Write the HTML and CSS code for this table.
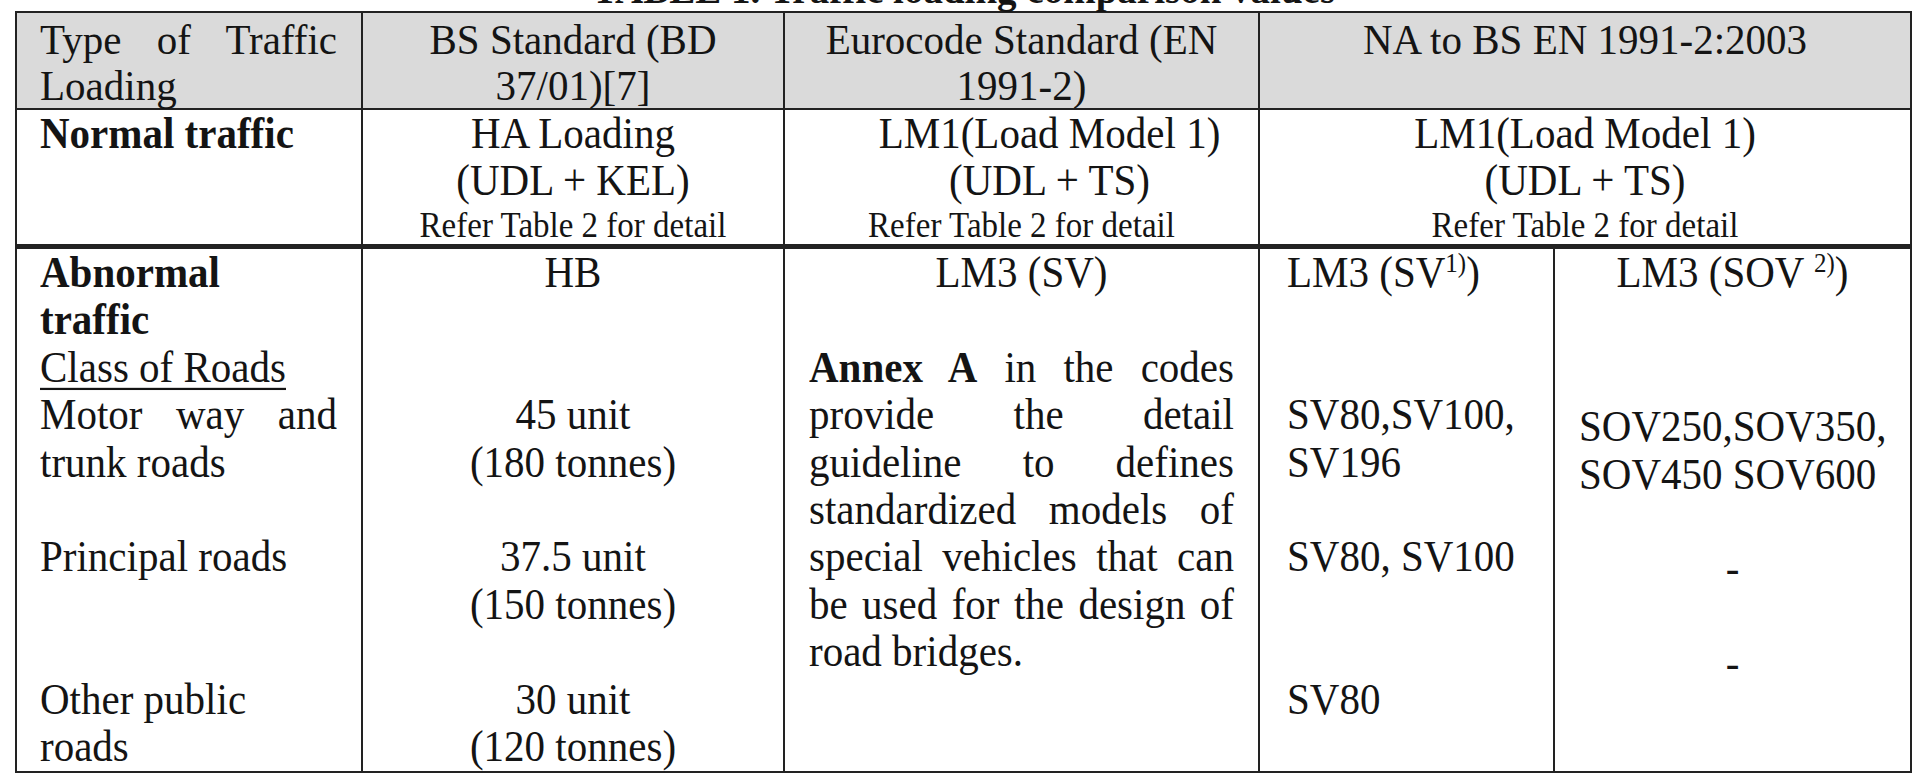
FILE: index.html
```html
<!DOCTYPE html>
<html lang="en">
<head>
<meta charset="utf-8">
<title>Traffic loading comparison values</title>
<link rel="stylesheet" href="styles.css">
</head>
<body>
<div class="page">
  <div class="title">TABLE 1. Traffic loading comparison values</div>
  <div class="grid">
    <div class="cell head first">
      <div class="ln j">Type of Traffic</div>
      <div class="ln">Loading</div>
    </div>
    <div class="cell head ctr">
      <div class="ln">BS Standard (BD</div>
      <div class="ln">37/01)[7]</div>
    </div>
    <div class="cell head ctr">
      <div class="ln">Eurocode Standard (EN</div>
      <div class="ln">1991-2)</div>
    </div>
    <div class="cell head ctr span2">
      <div class="ln">NA to BS EN 1991-2:2003</div>
    </div>

    <div class="cell body first">
      <div class="ln b">Normal traffic</div>
    </div>
    <div class="cell body ctr">
      <div class="ln">HA Loading</div>
      <div class="ln">(UDL + KEL)</div>
      <div class="small">Refer Table 2 for detail</div>
    </div>
    <div class="cell body ctr">
      <div class="ln shift">LM1(Load Model 1)</div>
      <div class="ln shift">(UDL + TS)</div>
      <div class="small">Refer Table 2 for detail</div>
    </div>
    <div class="cell body ctr span2">
      <div class="ln">LM1(Load Model 1)</div>
      <div class="ln">(UDL + TS)</div>
      <div class="small">Refer Table 2 for detail</div>
    </div>

    <div class="cell body low first">
      <div class="ln b">Abnormal</div>
      <div class="ln b">traffic</div>
      <div class="ln"><span class="u">Class of Roads</span></div>
      <div class="ln j">Motor way and</div>
      <div class="ln">trunk roads</div>
      <div class="ln">&nbsp;</div>
      <div class="ln">Principal roads</div>
      <div class="ln">&nbsp;</div>
      <div class="ln">&nbsp;</div>
      <div class="ln">Other public</div>
      <div class="ln">roads</div>
    </div>
    <div class="cell body low ctr">
      <div class="ln">HB</div>
      <div class="ln">&nbsp;</div>
      <div class="ln">&nbsp;</div>
      <div class="ln">45 unit</div>
      <div class="ln">(180 tonnes)</div>
      <div class="ln">&nbsp;</div>
      <div class="ln">37.5 unit</div>
      <div class="ln">(150 tonnes)</div>
      <div class="ln">&nbsp;</div>
      <div class="ln">30 unit</div>
      <div class="ln">(120 tonnes)</div>
    </div>
    <div class="cell body low">
      <div class="ln ctr">LM3 (SV)</div>
      <div class="ln">&nbsp;</div>
      <div class="ln j"><b>Annex A</b> in the codes</div>
      <div class="ln j">provide the detail</div>
      <div class="ln j">guideline to defines</div>
      <div class="ln j">standardized models of</div>
      <div class="ln j">special vehicles that can</div>
      <div class="ln j">be used for the design of</div>
      <div class="ln">road bridges.</div>
    </div>
    <div class="cell body low sv">
      <div class="ln">LM3 (SV<span class="sup">1)</span>)</div>
      <div class="ln">&nbsp;</div>
      <div class="ln">&nbsp;</div>
      <div class="ln">SV80,SV100,</div>
      <div class="ln">SV196</div>
      <div class="ln">&nbsp;</div>
      <div class="ln">SV80, SV100</div>
      <div class="ln">&nbsp;</div>
      <div class="ln">&nbsp;</div>
      <div class="ln">SV80</div>
    </div>
    <div class="cell body low">
      <div class="ln ctr">LM3 (SOV <span class="sup">2)</span>)</div>
      <div class="offset">
        <div class="ln">&nbsp;</div>
        <div class="ln">&nbsp;</div>
        <div class="ln">SOV250,SOV350,</div>
        <div class="ln">SOV450 SOV600</div>
        <div class="ln">&nbsp;</div>
        <div class="ln ctr">-</div>
        <div class="ln">&nbsp;</div>
        <div class="ln ctr">-</div>
      </div>
    </div>
  </div>
</div>
</body>
</html>
```

FILE: styles.css
```css
html, body {
  margin: 0;
  padding: 0;
  background: #ffffff;
}

body {
  font-family: "Liberation Serif", "Times New Roman", serif;
  color: #141414;
  overflow: hidden;
}

.page {
  padding-left: 15px;
  width: 1897px;
}

.title {
  font-weight: bold;
  font-size: 39px;
  line-height: 39px;
  height: 39px;
  margin-top: -30px;
  margin-bottom: 2px;
  text-align: center;
  white-space: nowrap;
}

.grid {
  margin-top: 1px;
  display: grid;
  grid-template-columns: 344px 420px 473px 293px 355px;
  grid-template-rows: 95px 134px 525px;
  gap: 2px;
  padding: 2px;
  background: #222222;
  width: max-content;
}

.cell {
  background: #ffffff;
  padding: 0 24px;
  font-size: 41px;
  line-height: 47.4px;
}

.cell.first {
  padding-left: 23px;
}

.cell.head {
  background: #dadada;
  line-height: 46px;
  padding-top: 3px;
}

.cell.low {
  margin-top: 3px;
}

.span2 {
  grid-column: span 2;
}

.ctr {
  text-align: center;
}

.ln {
  white-space: nowrap;
  transform: scaleY(1.1);
}

.cell.head .ln {
  transform: scaleY(1.05);
}

.ln.j {
  text-align: justify;
  text-align-last: justify;
  white-space: normal;
}

.b {
  font-weight: bold;
}

.u {
  text-decoration: underline;
  text-decoration-thickness: 2px;
  text-underline-offset: 5px;
}

.shift {
  padding-left: 56px;
}

.small {
  font-size: 33px;
  line-height: 40px;
  white-space: nowrap;
  transform: scaleY(1.1);
}

.sv {
  padding-left: 27px;
}

.sup {
  font-size: 25px;
  line-height: 0;
  vertical-align: 14px;
}

.offset {
  margin-top: 12px;
}
```
